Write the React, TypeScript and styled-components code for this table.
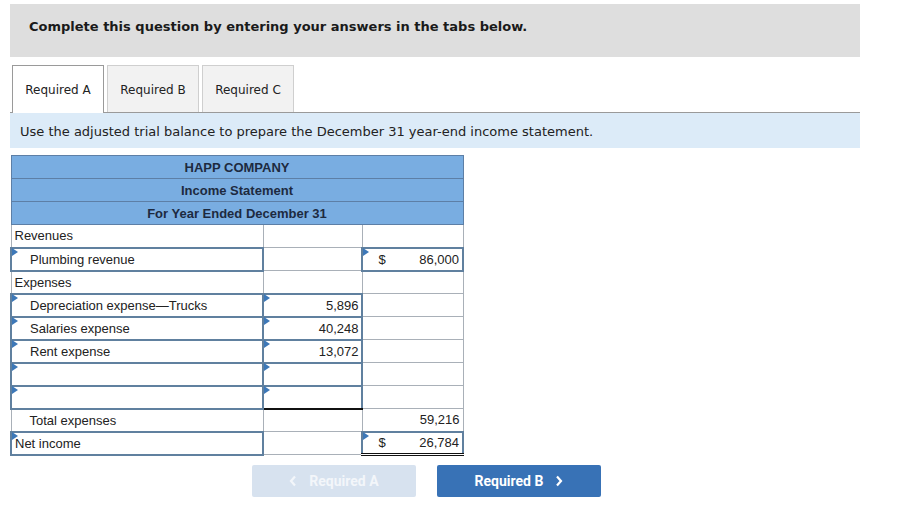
import React from 'react';
import styled, { createGlobalStyle } from 'styled-components';

const GlobalStyle = createGlobalStyle`
  body {
    margin: 0;
    background: #ffffff;
    font-family: "DejaVu Sans", Verdana, sans-serif;
  }
`;

const Page = styled.div`
  padding: 4px 0 0 10px;
  width: 850px;
`;

const Banner = styled.div`
  background: #dedede;
  height: 53px;
  display: flex;
  align-items: center;
  padding-left: 19px;
  font-size: 13px;
  font-weight: bold;
  color: #1a1a1a;
  box-sizing: border-box;
  padding-bottom: 9px;
`;

const TabBar = styled.div`
  display: flex;
  gap: 3px;
  margin-top: 8px;
  padding-left: 2px;
  border-bottom: 1px solid #9a9a9a;
`;

const Tab = styled.div<{ $active?: boolean }>`
  width: 92px;
  box-sizing: border-box;
  display: flex;
  align-items: center;
  justify-content: center;
  padding-top: 1px;
  font-size: 12px;
  color: #222;
  background: ${(p) => (p.$active ? '#ffffff' : '#f2f2f2')};
  border: 1px solid ${(p) => (p.$active ? '#9a9a9a' : '#cfcfcf')};
  border-bottom: none;
  margin-bottom: ${(p) => (p.$active ? '-1px' : '0')};
  height: ${(p) => (p.$active ? '48px' : '47px')};
`;

const Instruction = styled.div`
  background: #dcebf8;
  height: 35px;
  display: flex;
  align-items: center;
  padding-left: 10px;
  padding-top: 1px;
  box-sizing: border-box;
  font-size: 13px;
  color: #222;
`;

const Sheet = styled.table`
  margin-top: 7px;
  border-collapse: collapse;
  width: 454px;
  font-family: "Liberation Sans", Arial, sans-serif;
  font-size: 13px;
  color: #222;
`;

const Line = styled.tr`
  height: 23px;
`;

const HeadCell = styled.td`
  background: #79ade1;
  border: 1px solid #5d7fa6;
  padding: 0;
  text-align: center;
  font-weight: bold;
  color: #1d2a40;
`;

const Cell = styled.td<{ $input?: boolean; $indent?: boolean; $under?: 'single' | 'double' }>`
  position: relative;
  padding: 0 3px 0 ${(p) => (p.$indent ? '18px' : '3px')};
  border: ${(p) => (p.$input ? '2px solid #60809f' : '1px solid #a9b0b8')};
  ${(p) => p.$under === 'single' && 'border-bottom: 2px solid #111;'}
  ${(p) => p.$under === 'double' && 'border-bottom: 3px double #111;'}
  white-space: nowrap;
`;

const Marker = styled.span`
  position: absolute;
  top: 0;
  left: 0;
  width: 0;
  height: 0;
  border-top: 4px solid transparent;
  border-bottom: 4px solid transparent;
  border-left: 6px solid #3d78b8;
  transform: translateY(-1px);
`;

const Amount = styled.div`
  display: flex;
  justify-content: space-between;
  align-items: center;
`;

const Dollar = styled.span`
  padding-left: 12px;
`;

const Number = styled.div`
  text-align: right;
`;

const Nav = styled.div`
  display: flex;
  gap: 21px;
  margin-top: 9px;
  padding-left: 242px;
`;

const NavButton = styled.button<{ $disabled?: boolean }>`
  width: 164px;
  height: 32px;
  border: none;
  border-radius: 2px;
  display: flex;
  align-items: center;
  justify-content: center;
  gap: 12px;
  font-family: Roboto, "Liberation Sans", sans-serif;
  font-weight: bold;
  font-size: 14px;
  color: ${(p) => (p.$disabled ? '#f3f6fa' : '#ffffff')};
  background: ${(p) => (p.$disabled ? '#d7e2ef' : '#3872b6')};
`;

const Chevron = ({ dir }: { dir: 'left' | 'right' }) => (
  <svg width="8" height="12" viewBox="0 0 8 12">
    <path
      d={dir === 'left' ? 'M6 1.5 L2 6 L6 10.5' : 'M2 1.5 L6 6 L2 10.5'}
      fill="none"
      stroke="currentColor"
      strokeWidth="2.2"
    />
  </svg>
);

type Row = {
  label: string;
  labelInput?: boolean;
  indent?: boolean;
  mid?: string;
  midInput?: boolean;
  midUnder?: boolean;
  right?: string;
  rightInput?: boolean;
  dollar?: boolean;
  rightUnder?: boolean;
};

const rows: Row[] = [
  { label: 'Revenues' },
  { label: 'Plumbing revenue', labelInput: true, indent: true, right: '86,000', rightInput: true, dollar: true },
  { label: 'Expenses' },
  { label: 'Depreciation expense\u2014Trucks', labelInput: true, indent: true, mid: '5,896', midInput: true },
  { label: 'Salaries expense', labelInput: true, indent: true, mid: '40,248', midInput: true },
  { label: 'Rent expense', labelInput: true, indent: true, mid: '13,072', midInput: true },
  { label: '', labelInput: true, indent: true, midInput: true },
  { label: '', labelInput: true, indent: true, midInput: true, midUnder: true },
  { label: 'Total expenses', indent: true, right: '59,216' },
  { label: 'Net income', labelInput: true, right: '26,784', rightInput: true, dollar: true, rightUnder: true },
];

const App = () => {
  return (
    <Page>
      <GlobalStyle />
      <Banner>Complete this question by entering your answers in the tabs below.</Banner>
      <TabBar>
        <Tab $active>Required A</Tab>
        <Tab>Required B</Tab>
        <Tab>Required C</Tab>
      </TabBar>
      <Instruction>
        Use the adjusted trial balance to prepare the December 31 year-end income statement.
      </Instruction>
      <Sheet>
        <colgroup>
          <col style={{ width: 253 }} />
          <col style={{ width: 100 }} />
          <col style={{ width: 101 }} />
        </colgroup>
        <tbody>
          <Line>
            <HeadCell colSpan={3}>HAPP COMPANY</HeadCell>
          </Line>
          <Line>
            <HeadCell colSpan={3}>Income Statement</HeadCell>
          </Line>
          <Line>
            <HeadCell colSpan={3}>For Year Ended December 31</HeadCell>
          </Line>
          {rows.map((r, i) => (
            <Line key={i}>
              <Cell $input={r.labelInput} $indent={r.indent}>
                {r.labelInput && <Marker />}
                {r.label}
              </Cell>
              <Cell $input={r.midInput} $under={r.midUnder ? 'single' : undefined}>
                {r.midInput && <Marker />}
                <Number>{r.mid}</Number>
              </Cell>
              <Cell $input={r.rightInput} $under={r.rightUnder ? 'double' : undefined}>
                {r.rightInput && <Marker />}
                {r.dollar ? (
                  <Amount>
                    <Dollar>$</Dollar>
                    <span>{r.right}</span>
                  </Amount>
                ) : (
                  <Number>{r.right}</Number>
                )}
              </Cell>
            </Line>
          ))}
        </tbody>
      </Sheet>
      <Nav>
        <NavButton $disabled>
          <Chevron dir="left" />
          Required A
        </NavButton>
        <NavButton>
          Required B
          <Chevron dir="right" />
        </NavButton>
      </Nav>
    </Page>
  );
};

export default App;
